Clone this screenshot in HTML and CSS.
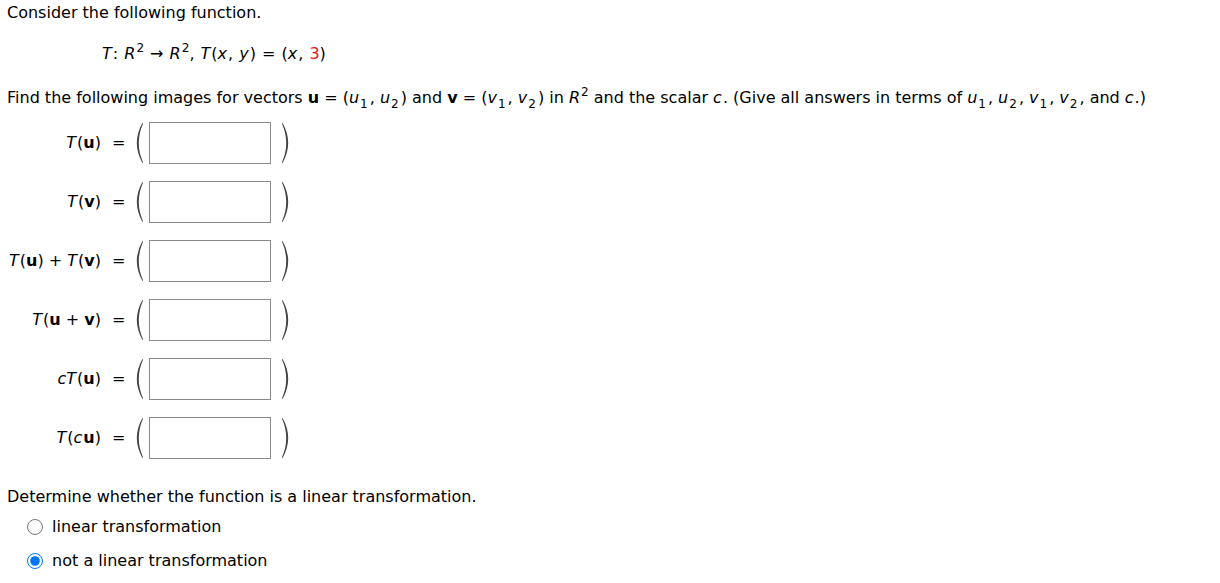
FILE: index.html
```html
<!DOCTYPE html>
<html lang="en">
<head>
    <meta charset="UTF-8">
    <title>Linear Transformation</title>
    <link rel="stylesheet" href="styles.css">
</head>
<body>
    <div class="question">
        <p class="intro">Consider the following function.</p>

        <p class="formula">
            <i>T</i>: <i>R</i><sup>2</sup> &rarr; <i>R</i><sup>2</sup>, <i>T</i>(<i>x</i>, <i>y</i>) = (<i>x</i>, <span class="given">3</span>)
        </p>

        <p class="prompt">
            Find the following images for vectors <b>u</b> = (<i>u</i><sub>1</sub>, <i>u</i><sub>2</sub>) and <b>v</b> = (<i>v</i><sub>1</sub>, <i>v</i><sub>2</sub>) in <i>R</i><sup>2</sup> and the scalar <i>c</i>. (Give all answers in terms of <i>u</i><sub>1</sub>, <i>u</i><sub>2</sub>, <i>v</i><sub>1</sub>, <i>v</i><sub>2</sub>, and <i>c</i>.)
        </p>

        <div class="answers">
            <div class="answer-row">
                <span class="label"><i>T</i>(<b>u</b>)</span>
                <span class="eq">=</span>
                <svg class="paren" viewBox="0 0 12 46"><path d="M11.5 1 Q-1 23 11.5 45 L12 44 Q2.8 23 12 2 Z"/></svg>
                <input class="box" type="text">
                <svg class="paren right" viewBox="0 0 12 46"><path d="M0.5 1 Q13 23 0.5 45 L0 44 Q9.2 23 0 2 Z"/></svg>
            </div>
            <div class="answer-row">
                <span class="label"><i>T</i>(<b>v</b>)</span>
                <span class="eq">=</span>
                <svg class="paren" viewBox="0 0 12 46"><path d="M11.5 1 Q-1 23 11.5 45 L12 44 Q2.8 23 12 2 Z"/></svg>
                <input class="box" type="text">
                <svg class="paren right" viewBox="0 0 12 46"><path d="M0.5 1 Q13 23 0.5 45 L0 44 Q9.2 23 0 2 Z"/></svg>
            </div>
            <div class="answer-row">
                <span class="label"><i>T</i>(<b>u</b>) + <i>T</i>(<b>v</b>)</span>
                <span class="eq">=</span>
                <svg class="paren" viewBox="0 0 12 46"><path d="M11.5 1 Q-1 23 11.5 45 L12 44 Q2.8 23 12 2 Z"/></svg>
                <input class="box" type="text">
                <svg class="paren right" viewBox="0 0 12 46"><path d="M0.5 1 Q13 23 0.5 45 L0 44 Q9.2 23 0 2 Z"/></svg>
            </div>
            <div class="answer-row">
                <span class="label"><i>T</i>(<b>u</b> + <b>v</b>)</span>
                <span class="eq">=</span>
                <svg class="paren" viewBox="0 0 12 46"><path d="M11.5 1 Q-1 23 11.5 45 L12 44 Q2.8 23 12 2 Z"/></svg>
                <input class="box" type="text">
                <svg class="paren right" viewBox="0 0 12 46"><path d="M0.5 1 Q13 23 0.5 45 L0 44 Q9.2 23 0 2 Z"/></svg>
            </div>
            <div class="answer-row">
                <span class="label"><i>cT</i>(<b>u</b>)</span>
                <span class="eq">=</span>
                <svg class="paren" viewBox="0 0 12 46"><path d="M11.5 1 Q-1 23 11.5 45 L12 44 Q2.8 23 12 2 Z"/></svg>
                <input class="box" type="text">
                <svg class="paren right" viewBox="0 0 12 46"><path d="M0.5 1 Q13 23 0.5 45 L0 44 Q9.2 23 0 2 Z"/></svg>
            </div>
            <div class="answer-row">
                <span class="label"><i>T</i>(<i>c</i><b>u</b>)</span>
                <span class="eq">=</span>
                <svg class="paren" viewBox="0 0 12 46"><path d="M11.5 1 Q-1 23 11.5 45 L12 44 Q2.8 23 12 2 Z"/></svg>
                <input class="box" type="text">
                <svg class="paren right" viewBox="0 0 12 46"><path d="M0.5 1 Q13 23 0.5 45 L0 44 Q9.2 23 0 2 Z"/></svg>
            </div>
        </div>

        <p class="prompt-choice">Determine whether the function is a linear transformation.</p>
        <ul class="choices">
            <li><label><input type="radio" name="linear"> linear transformation</label></li>
            <li><label><input type="radio" name="linear" checked> not a linear transformation</label></li>
        </ul>
    </div>
</body>
</html>
```

FILE: styles.css
```css
* {
    margin: 0;
    padding: 0;
    box-sizing: border-box;
}

body {
    font-family: 'DejaVu Sans', Verdana, sans-serif;
    font-size: 16px;
    line-height: 19px;
    color: #000;
    background: #fff;
}

.question {
    padding: 3px 0 0 7px;
}

i {
    font-style: italic;
    padding-right: 1px;
}

sup, sub {
    font-size: 12px;
    line-height: 0;
}

sup {
    vertical-align: 7px;
}

sub {
    vertical-align: -5px;
}

.formula {
    margin-top: 22px;
    padding-left: 95px;
    word-spacing: 1px;
}

.given {
    color: #e02020;
}

.prompt {
    margin-top: 25px;
}

.prompt sub {
    margin-right: 2px;
}

.answers {
    display: flex;
    flex-direction: column;
    gap: 14px;
    margin-top: 13px;
}

.answer-row {
    display: flex;
    align-items: center;
    height: 45px;
}

.label {
    width: 94px;
    text-align: right;
    white-space: nowrap;
}

.eq {
    width: 10px;
    margin-left: 11px;
    text-align: center;
}

.paren {
    width: 11px;
    height: 46px;
    margin-left: 10px;
    fill: #444;
}

.paren.right {
    margin-left: 11px;
}

.box {
    width: 122px;
    height: 42px;
    margin-left: 6px;
    border: 1px solid #8a8a8a;
    background: #fff;
}

.prompt-choice {
    margin-top: 27px;
}

.choices {
    list-style: none;
    margin-top: 11px;
}

.choices li {
    height: 34px;
    padding-left: 20px;
}

.choices input {
    width: 16px;
    height: 16px;
    margin: 0 4px 0 0;
    vertical-align: -3px;
}
```
